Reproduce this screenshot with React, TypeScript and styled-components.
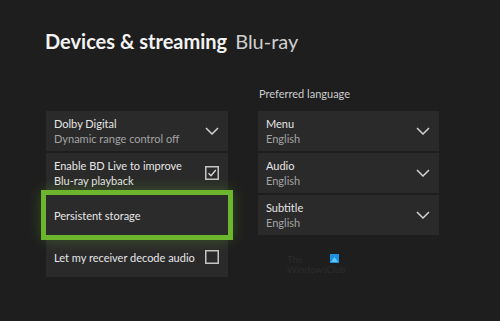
import React from "react";
import styled, { createGlobalStyle } from "styled-components";

const GlobalStyle = createGlobalStyle`
    html, body {
        margin: 0;
        padding: 0;
        background: #1e1e1e;
    }
    body {
        font-family: Lato, "Open Sans", "Liberation Sans", sans-serif;
    }
`;

const Page = styled.div`
    position: relative;
    box-sizing: border-box;
    width: 500px;
    height: 321px;
    overflow: hidden;
    background: #1e1e1e;
    padding: 28px 0 0 45px;
`;

const Title = styled.h1`
    margin: 0;
    font-size: 20px;
    line-height: 26px;
    font-weight: 700;
    color: #f2f2f2;
    span {
        font-weight: 400;
        color: #cfcfcf;
        margin-left: 8px;
    }
`;

const Columns = styled.div`
    display: grid;
    grid-template-columns: 182px 181px;
    grid-template-rows: 27px auto;
    column-gap: 30px;
    margin: 30px 0 0 1px;
`;

const GroupLabel = styled.div`
    grid-column: 2;
    grid-row: 1;
    font-size: 11px;
    color: #cdcdcd;
    padding-left: 1px;
    line-height: 14px;
    padding-top: 3px;
`;

const List = styled.div<{ $col: number }>`
    grid-column: ${(p) => p.$col};
    grid-row: 2;
    display: flex;
    flex-direction: column;
    gap: 2px;
`;

const Tile = styled.div<{ $focused?: boolean }>`
    box-sizing: border-box;
    height: 40px;
    padding: 0 9px 0 8px;
    display: flex;
    align-items: center;
    justify-content: space-between;
    background: ${(p) => (p.$focused ? "#2b2b2b" : "#2a2a2a")};
    outline: ${(p) => (p.$focused ? "5px solid #6cb62e" : "none")};
    box-shadow: ${(p) => (p.$focused ? "0 0 14px 4px rgba(108, 182, 46, 0.35)" : "none")};
    position: relative;
    z-index: ${(p) => (p.$focused ? 1 : 0)};
`;

const TextBlock = styled.div`
    display: flex;
    flex-direction: column;
`;

const Label = styled.div`
    font-size: 11px;
    line-height: 15px;
    color: #e6e6e6;
`;

const Sub = styled.div`
    font-size: 11px;
    line-height: 15px;
    color: #a3a3a3;
`;

const Watermark = styled.div`
    position: absolute;
    left: 287px;
    top: 255px;
    font-size: 9.5px;
    line-height: 10px;
    color: #2c2c2c;
    svg {
        position: absolute;
        left: 43px;
        top: -1px;
    }
`;

const Chevron = () => (
    <svg width="14" height="8" viewBox="0 0 14 8">
        <path d="M1 1 L7 7 L13 1" fill="none" stroke="#d2d2d2" strokeWidth="1.5" />
    </svg>
);

const CheckBox = ({ checked }: { checked?: boolean }) => (
    <svg width="14" height="14" viewBox="0 0 14 14">
        <rect x="0.75" y="0.75" width="12.5" height="12.5" fill="none" stroke="#c4c4c4" strokeWidth="1.5" />
        {checked && <path d="M3.5 7.2 L6 9.7 L10.8 4" fill="none" stroke="#dcdcdc" strokeWidth="1.3" />}
    </svg>
);

const languages = [
    { name: "Menu", value: "English" },
    { name: "Audio", value: "English" },
    { name: "Subtitle", value: "English" },
];

const App = () => {
    return (
        <>
            <GlobalStyle />
            <Page>
                <Title>
                    Devices &amp; streaming<span>Blu-ray</span>
                </Title>
                <Columns>
                    <List $col={1}>
                        <Tile>
                            <TextBlock>
                                <Label>Dolby Digital</Label>
                                <Sub>Dynamic range control off</Sub>
                            </TextBlock>
                            <Chevron />
                        </Tile>
                        <Tile>
                            <TextBlock>
                                <Label>Enable BD Live to improve</Label>
                                <Label>Blu-ray playback</Label>
                            </TextBlock>
                            <CheckBox checked />
                        </Tile>
                        <Tile $focused>
                            <Label>Persistent storage</Label>
                        </Tile>
                        <Tile>
                            <Label>Let my receiver decode audio</Label>
                            <CheckBox />
                        </Tile>
                    </List>
                    <GroupLabel>Preferred language</GroupLabel>
                    <List $col={2}>
                        {languages.map((l) => (
                            <Tile key={l.name}>
                                <TextBlock>
                                    <Label>{l.name}</Label>
                                    <Sub>{l.value}</Sub>
                                </TextBlock>
                                <Chevron />
                            </Tile>
                        ))}
                    </List>
                </Columns>
                <Watermark>
                    The
                    <br />
                    WindowsClub
                    <svg width="9" height="9" viewBox="0 0 9 9">
                        <rect width="9" height="9" fill="#1f8fe0" />
                        <path d="M1 8 L4.5 3 L8 8 Z" fill="#5cc8ff" />
                    </svg>
                </Watermark>
            </Page>
        </>
    );
};

export default App;
